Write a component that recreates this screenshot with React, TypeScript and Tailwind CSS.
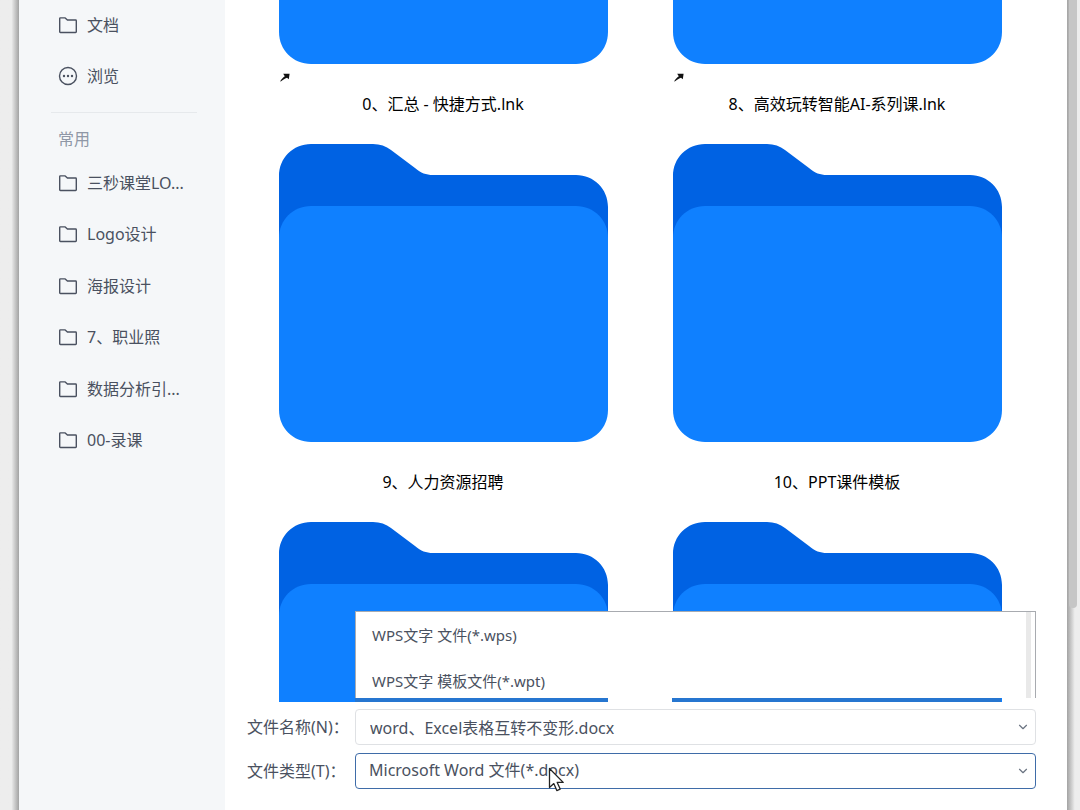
import { ChevronDown } from 'lucide-react';

const places = [
  { label: '文档', icon: 'folder' },
  { label: '浏览', icon: 'more' },
];

const favourites = ['三秒课堂LO...', 'Logo设计', '海报设计', '7、职业照', '数据分析引...', '00-录课'];

const files = [
  { id: 1, name: '0、汇总 - 快捷方式.lnk', shortcut: true },
  { id: 2, name: '8、高效玩转智能AI-系列课.lnk', shortcut: true },
  { id: 3, name: '9、人力资源招聘', shortcut: false },
  { id: 4, name: '10、PPT课件模板', shortcut: false },
  { id: 5, name: '', shortcut: false },
  { id: 6, name: '', shortcut: false },
];

const fileTypes = ['WPS文字 文件(*.wps)', 'WPS文字 模板文件(*.wpt)'];

function FolderOutline() {
  return (
    <svg className="h-5 w-5 shrink-0" viewBox="0 0 20 20" fill="none" stroke="#4a5160" strokeWidth="1.4" strokeLinejoin="round" aria-hidden="true">
      <path d="M2.4 2.9H7.2L9.4 5H17.6Q18.3 5 18.3 5.7V16.8Q18.3 17.5 17.6 17.5H2.4Q1.7 17.5 1.7 16.8V3.6Q1.7 2.9 2.4 2.9Z" />
    </svg>
  );
}

function MoreCircle() {
  return (
    <svg className="h-5 w-5 shrink-0" viewBox="0 0 20 20" fill="none" aria-hidden="true">
      <circle cx="10" cy="10" r="8.5" stroke="#4a5160" strokeWidth="1.4" />
      <circle cx="6" cy="10" r="1.2" fill="#4a5160" />
      <circle cx="10" cy="10" r="1.2" fill="#4a5160" />
      <circle cx="14" cy="10" r="1.2" fill="#4a5160" />
    </svg>
  );
}

function BigFolder() {
  return (
    <svg className="block w-full" viewBox="0 0 329 298" aria-hidden="true">
      <path d="M0 110V32C0 14 14 0 32 0H94C101 0 107 2 112 6L136 24C142 29 147 31 154 31H297C315 31 329 45 329 63V110Z" fill="#0062e3" />
      <path d="M0 94C0 76 14 62 32 62H297C315 62 329 76 329 94V266C329 284 315 298 297 298H32C14 298 0 284 0 266Z" fill="#0f80ff" />
    </svg>
  );
}

function ShortcutArrow() {
  return (
    <svg className="absolute left-0 top-[307px] h-[10px] w-[12px]" viewBox="0 0 12 10" aria-hidden="true">
      <path d="M4.2 0.8H10.6L9.8 6.2L8 4.8C5.6 5.8 3.4 7 1.8 8.6L1.2 8.2C2.4 6.2 4 4.4 5.8 3.2Z" fill="#111" />
    </svg>
  );
}

function Sidebar() {
  return (
    <nav className="w-[206px] shrink-0 bg-[#f5f7f9] text-[#4a5160]">
      <ul className="-mt-px">
        {places.map((place) => (
          <li key={place.label}>
            <a href="#" className="flex h-[51px] items-center gap-[9px] pl-[39px]">
              {place.icon === 'folder' ? <FolderOutline /> : <MoreCircle />}
              {place.label}
            </a>
          </li>
        ))}
      </ul>
      <hr className="ml-8 mr-7 mt-[11px] border-[#e6e9ec]" />
      <h2 className="mt-4 pl-[39px] leading-5 text-[#8f97a6]">常用</h2>
      <ul className="mt-2 grid h-[309px] auto-rows-fr">
        {favourites.map((name) => (
          <li key={name}>
            <a href="#" className="flex h-full items-center gap-[9px] pl-[39px]">
              <FolderOutline />
              {name}
            </a>
          </li>
        ))}
      </ul>
    </nav>
  );
}

function TypePopup() {
  return (
    <div className="absolute bottom-0 left-[130px] right-[31px] text-[15px]">
      <div className="flex h-[87px] overflow-hidden border border-b-0 border-[#a8abb0] bg-white">
        <ul role="listbox" aria-label="文件类型" className="grow">
          {fileTypes.map((type) => (
            <li key={type} role="option" aria-selected="false" className="flex h-[46px] items-center pl-4">
              {type}
            </li>
          ))}
        </ul>
        <div className="mr-1 w-[5px] bg-[#e9e9e9]" />
      </div>
      <div className="flex h-1 gap-16">
        <div className="w-[253px] bg-[#2676d0]" />
        <div className="w-[329px] bg-[#2676d0]" />
      </div>
    </div>
  );
}

export default function App() {
  return (
    <div
      className="flex h-screen overflow-hidden bg-[#ededed] text-base"
      style={{ fontFamily: '"Noto Sans", "Noto Sans CJK SC", sans-serif' }}
    >
      <div className="w-[19px] shrink-0 bg-linear-to-r from-[#ededed] from-60% to-[#a3a3a3]" />

      <div className="flex min-w-0 grow bg-white">
        <Sidebar />

        <main className="flex min-w-0 grow flex-col text-[#4a5160]">
          <section className="relative h-[702px] shrink-0 overflow-hidden pl-[21px] pr-[33px]">
            <ul className="-mt-[234px] grid grid-cols-2">
              {files.map((file) => (
                <li key={file.id} className="relative mx-auto w-[329px]">
                  <BigFolder />
                  {file.shortcut && <ShortcutArrow />}
                  {file.name && <p className="my-7 text-center leading-6 text-black">{file.name}</p>}
                </li>
              ))}
            </ul>
            <TypePopup />
          </section>

          <form className="grid grid-cols-[108px_1fr] gap-y-2 pl-[22px] pr-[31px] pt-[7px]">
            <label htmlFor="file-name" className="self-center whitespace-nowrap">文件名称(N)：</label>
            <div className="flex h-9 items-center rounded border border-[#dfe1e4] pr-[5px]">
              <input id="file-name" defaultValue="word、Excel表格互转不变形.docx" className="h-full min-w-0 grow pl-3.5 outline-none" />
              <button type="button" aria-label="展开文件名称">
                <ChevronDown className="h-3.5 w-3.5 text-[#6b7482]" />
              </button>
            </div>
            <label htmlFor="file-type" className="self-center whitespace-nowrap">文件类型(T)：</label>
            <div className="relative flex h-9 items-center rounded border border-[#3f6ca8] pr-[5px]">
              <select id="file-type" className="h-full min-w-0 grow appearance-none pb-0.5 pl-[13px] outline-none">
                <option>Microsoft Word 文件(*.docx)</option>
              </select>
              <ChevronDown className="h-3.5 w-3.5 text-[#6b7482]" />
              <svg className="absolute left-[192px] top-[13px] h-[26px] w-[17px]" viewBox="0 0 17 26" aria-hidden="true">
                <path d="M1.5 1.5V20.5L5.8 16.6L8.8 23.6L12.2 22.1L9.2 15.4H15.2Z" fill="#fff" stroke="#222" strokeWidth="1.3" strokeLinejoin="round" />
              </svg>
            </div>
          </form>
        </main>
      </div>

      <div className="w-[13px] shrink-0 bg-linear-to-r from-[#a3a3a3] to-[#ededed] to-60%">
        <div className="ml-0.5 h-[608px] w-2 rounded-b bg-[#c6c6c6]" />
      </div>
    </div>
  );
}
